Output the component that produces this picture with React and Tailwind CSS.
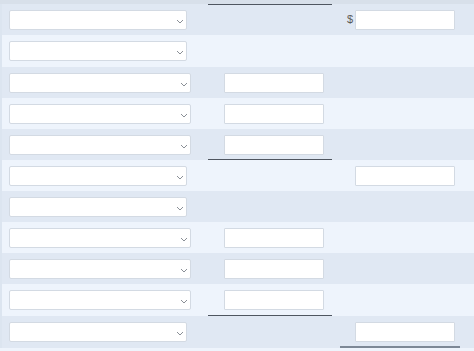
import React from "react";

const rows = [
  { h: 31, dark: true, mid: false, right: "dollar", midTop: true },
  { h: 32, dark: false },
  { h: 31, dark: true, mid: true },
  { h: 31, dark: false, mid: true },
  { h: 31, dark: true, mid: true, midBottom: true },
  { h: 31, dark: false, right: "input" },
  { h: 31, dark: true },
  { h: 31, dark: false, mid: true },
  { h: 31, dark: true, mid: true },
  { h: 32, dark: false, mid: true, midBottom: true },
  { h: 32, dark: true, right: "input", rightBottom: true },
];

function Chevron() {
  return (
    <svg width="8" height="5" viewBox="0 0 8 5" className="absolute right-[2px] top-[8px]">
      <path d="M1 1 L4 4 L7 1" fill="none" stroke="#8a8f96" strokeWidth="1" />
    </svg>
  );
}

function Select({ wide }) {
  return (
    <div
      className={`relative h-[20px] bg-white border border-[#d3dae3] rounded-[2px] ${
        wide ? "w-[182px]" : "w-[178px]"
      }`}
    >
      <Chevron />
    </div>
  );
}

function Box() {
  return <div className="h-[20px] w-[100px] bg-white border border-[#d3dae3] rounded-[1px]" />;
}

export default function App() {
  return (
    <div
      className="w-[474px] h-[351px] bg-[#eef4fc] overflow-hidden"
      style={{ fontFamily: '"Liberation Sans", Arial, sans-serif' }}
    >
      <div className="h-[4px] bg-[#d8e0ea]" />
      {rows.map((r, i) => (
        <div
          key={i}
          className={`flex border-l-2 border-[#dce5f0] ${r.dark ? "bg-[#e0e8f3]" : "bg-[#eef4fc]"}`}
          style={{ height: r.h }}
        >
          <div className="w-[205px] pl-[7px] pt-[6px]">
            <Select wide={r.mid} />
          </div>
          <div
            className={`w-[124px] mx-[1px] pl-[16px] pt-[6px] ${r.midTop ? "border-t border-[#4f5660]" : ""} ${
              r.midBottom ? "border-b border-[#4f5660]" : ""
            }`}
          >
            {r.mid && <Box />}
          </div>
          <div className="flex-1 pl-[7px]">
            <div
              className={`h-full w-[120px] flex items-start pt-[6px] ${
                r.rightBottom ? "border-b-2 border-[#7d8896]" : ""
              }`}
            >
              {r.right === "dollar" && (
                <span className="ml-[7px] w-[8px] pt-[4px] text-[11px] font-normal leading-none text-[#5a5a5a]">$</span>
              )}
              {r.right === "dollar" && <Box />}
              {r.right === "input" && (
                <div className="pl-[15px]">
                  <Box />
                </div>
              )}
            </div>
          </div>
        </div>
      ))}
    </div>
  );
}
